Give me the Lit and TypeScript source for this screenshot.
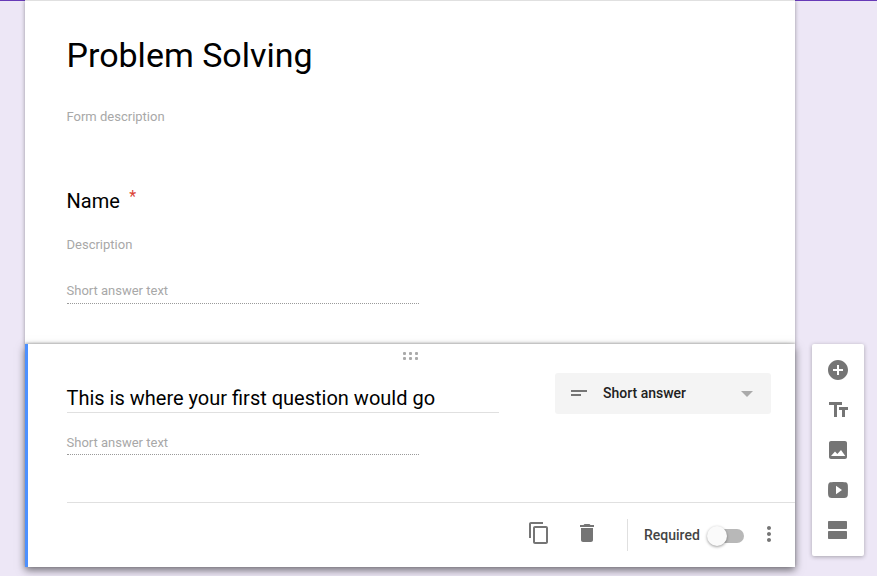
import { LitElement, html, css, svg } from "lit";
import { customElement, property } from "lit/decorators.js";

const ICONS: Record<string, string> = {
  copy: "M16 1H4c-1.1 0-2 .9-2 2v14h2V3h12V1zm3 4H8c-1.1 0-2 .9-2 2v14c0 1.1.9 2 2 2h11c1.1 0 2-.9 2-2V7c0-1.1-.9-2-2-2zm0 16H8V7h11v14z",
  trash: "M6 19c0 1.1.9 2 2 2h8c1.1 0 2-.9 2-2V7H6v12zM19 4h-3.5l-1-1h-5l-1 1H5v2h14V4z",
  more: "M12 8c1.1 0 2-.9 2-2s-.9-2-2-2-2 .9-2 2 .9 2 2 2zm0 2c-1.1 0-2 .9-2 2s.9 2 2 2 2-.9 2-2-.9-2-2-2zm0 6c-1.1 0-2 .9-2 2s.9 2 2 2 2-.9 2-2-.9-2-2-2z",
  shortText: "M4 9h16v2H4V9zm0 4h10v2H4v-2z",
  add: "M12 2C6.48 2 2 6.48 2 12s4.48 10 10 10 10-4.48 10-10S17.52 2 12 2zm5 11h-4v4h-2v-4H7v-2h4V7h2v4h4v2z",
  title: "M3 4v3h5v12h3V7h5V4H3zm19 5h-9v3h3v7h3v-7h3V9z",
  image: "M19 3H5c-1.1 0-2 .9-2 2v14c0 1.1.9 2 2 2h14c1.1 0 2-.9 2-2V5c0-1.1-.9-2-2-2zM5 18l4-4.5 2.3 2.5L15 12l4.3 6H5z",
  video: "M12 4c-4 0-6 .1-7.6.3C3 4.5 2.4 5.6 2.2 7 2 9 2 15 2.2 17c.2 1.4.8 2.5 2.2 2.7 1.6.2 3.6.3 7.6.3s6-.1 7.6-.3c1.4-.2 2-1.3 2.2-2.7.2-2 .2-8 0-10-.2-1.4-.8-2.5-2.2-2.7C18 4.100 16 4 12 4zm-2 12.200V7.800l6 4.200-6 4.200z",
  section: "M20 13H3c-.55 0-1 .45-1 1v6c0 .55.45 1 1 1h17c.55 0 1-.45 1-1v-6c0-.55-.45-1-1-1zm0-10H3c-.55 0-1 .45-1 1v6c0 .55.45 1 1 1h17c.55 0 1-.45 1-1V4c0-.55-.45-1-1-1z",
};

@customElement("form-icon")
class FormIcon extends LitElement {
  @property() name = "";
  static styles = css`
    :host { display: block; width: 24px; height: 24px; flex: none; color: #757575; }
    svg { display: block; fill: currentColor; }
  `;
  render() {
    return html`<svg width="24" height="24" viewBox="0 0 24 24">${svg`<path d=${ICONS[this.name]}></path>`}</svg>`;
  }
}

@customElement("side-toolbar")
class SideToolbar extends LitElement {
  static styles = css`
    :host {
      display: flex; flex-direction: column; align-items: center; gap: 16px;
      box-sizing: border-box; width: 52px; height: 212px; padding-top: 14px;
      background: #fff; border-radius: 2px;
      box-shadow: 0 1px 4px rgba(0, 0, 0, 0.3);
    }
  `;
  render() {
    return ["add", "title", "image", "video", "section"].map(
      (n) => html`<form-icon name=${n}></form-icon>`
    );
  }
}

@customElement("app-root")
class AppRoot extends LitElement {
  static styles = css`
    :host {
      display: flex; align-items: flex-start; box-sizing: border-box;
      height: 576px; padding-left: 25px; overflow: hidden;
      background: linear-gradient(#673ab7 1px, #ede7f6 1px);
      font-family: Roboto, sans-serif; color: #000;
    }
    .form { width: 770px; flex: none; }
    .head {
      box-sizing: border-box; height: 344px; padding: 34px 42px 0;
      background: #fff; border-top: 1px solid #e0e0e0;
      box-shadow: 0 1px 4px rgba(0, 0, 0, 0.37);
    }
    h1, .hint, .name, .prompt { text-indent: -0.5px; }
    h1 { margin: 0; font-size: 34px; line-height: 40px; font-weight: 400; }
    .hint { font-size: 13px; line-height: 18px; color: #a8a8a8; }
    .form-desc { margin-top: 33px; }
    .name { display: flex; margin-top: 63px; font-size: 20px; line-height: 24px; }
    .star { margin-left: 10px; margin-top: -4px; font-size: 16px; color: #db4437; }
    .desc { margin-top: 23px; }
    .answer {
      width: 352px; height: 21px; margin-top: 28px;
      border-bottom: 1px dotted #9a9a9a;
    }
    .question {
      position: relative; display: flex; flex-direction: column;
      box-sizing: border-box; height: 223px; border-left: 3px solid #4d90fe;
      background: #fff;
      box-shadow: 0 -1px 2px rgba(0, 0, 0, 0.2), 0 3px 8px rgba(0, 0, 0, 0.55);
    }
    .grip {
      display: grid; grid-template-columns: repeat(3, 3px); gap: 2px 3px;
      margin: 8px 0 0 375px;
    }
    .grip i { width: 3px; height: 3px; border-radius: 1px; background: #aaa; }
    .body { display: flex; justify-content: space-between; padding: 13px 24px 0 39px; }
    .prompt {
      width: 432px; height: 27px; margin-top: 12px; font-size: 20px; line-height: 26px;
      border-bottom: 1px solid #e0e0e0;
    }
    .reply { height: 20px; margin-top: 21px; }
    .select {
      display: flex; align-items: center; box-sizing: border-box;
      width: 216px; height: 41px; padding: 0 18px 1px 12px;
      background: #f4f4f4; border-radius: 3px;
      font-size: 14px; font-weight: 500; color: #212121;
    }
    .select span { margin-left: 12px; flex: 1; }
    .caret {
      width: 0; height: 0; margin-top: 1px; border: 6px solid transparent;
      border-top-color: #aaa; border-bottom: 0;
    }
    .actions {
      display: flex; align-items: flex-start; margin: auto 0 0 39px; height: 64px;
      box-sizing: content-box; border-top: 1px solid #e0e0e0;
    }
    .actions form-icon { margin-top: 18px; }
    .copy { margin-left: 460px; }
    .trash { margin-left: 24px; }
    .rule { width: 1px; height: 32px; margin: 16px 16px 0 28px; background: #e0e0e0; }
    .required { width: 56px; margin-top: 22px; font-size: 14px; line-height: 20px; font-weight: 500; color: #444; white-space: nowrap; }
    .track { display: flex; width: 36px; height: 14px; margin: 26px 0 0 8px; border-radius: 7px; background: #b8b8b8; }
    .thumb {
      width: 20px; height: 20px; margin: -3px 0 0 -1px; border-radius: 50%;
      background: #fafafa; box-shadow: 0 1px 3px rgba(0, 0, 0, 0.4);
    }
    .actions .more { margin-top: 19px; margin-left: 13px; }
    side-toolbar { margin: 344px 0 0 17px; }
  `;
  render() {
    return html`
      <main class="form">
        <section class="head">
          <h1>Problem Solving</h1>
          <div class="hint form-desc">Form description</div>
          <div class="name">Name<span class="star">*</span></div>
          <div class="hint desc">Description</div>
          <div class="hint answer">Short answer text</div>
        </section>
        <section class="question">
          <div class="grip">${[0, 1, 2, 3, 4, 5].map(() => html`<i></i>`)}</div>
          <div class="body">
            <div>
              <div class="prompt">This is where your first question would go</div>
              <div class="hint answer reply">Short answer text</div>
            </div>
            <div class="select">
              <form-icon name="shortText"></form-icon>
              <span>Short answer</span>
              <div class="caret"></div>
            </div>
          </div>
          <div class="actions">
            <form-icon class="copy" name="copy"></form-icon>
            <form-icon class="trash" name="trash"></form-icon>
            <div class="rule"></div>
            <div class="required">Required</div>
            <div class="track"><div class="thumb"></div></div>
            <form-icon class="more" name="more"></form-icon>
          </div>
        </section>
      </main>
      <side-toolbar></side-toolbar>
    `;
  }
}
